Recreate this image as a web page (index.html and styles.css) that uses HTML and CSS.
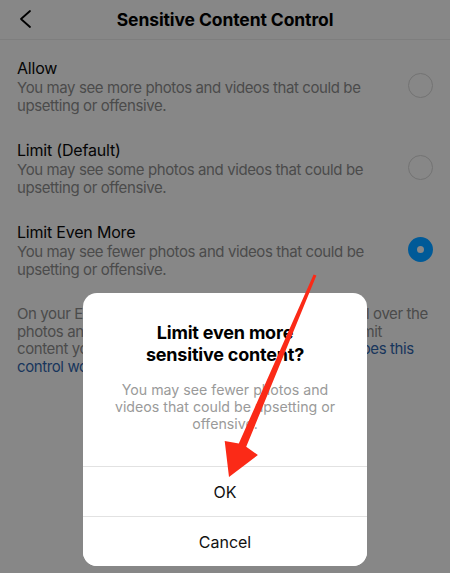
FILE: index.html
```html
<!DOCTYPE html>
<html lang="en">
<head>
<meta charset="utf-8">
<title>Sensitive Content Control</title>
<link rel="stylesheet" href="styles.css">
</head>
<body>
<div class="screen">
  <header class="topbar">
    <button class="back" aria-label="Back">
      <svg width="14" height="20" viewBox="0 0 14 20"><path d="M12 2 L3 10 L12 18" fill="none" stroke="#000" stroke-width="1.8" stroke-linecap="round" stroke-linejoin="round"/></svg>
    </button>
    <h1 class="title">Sensitive Content Control</h1>
    <span class="spacer"></span>
  </header>

  <ul class="options">
    <li class="option">
      <div class="option-text">
        <div class="option-name">Allow</div>
        <div class="option-desc">You may see more photos and videos that could be<br>upsetting or offensive.</div>
      </div>
      <span class="radio"></span>
    </li>
    <li class="option">
      <div class="option-text">
        <div class="option-name">Limit (Default)</div>
        <div class="option-desc">You may see some photos and videos that could be<br>upsetting or offensive.</div>
      </div>
      <span class="radio"></span>
    </li>
    <li class="option">
      <div class="option-text">
        <div class="option-name">Limit Even More</div>
        <div class="option-desc">You may see fewer photos and videos that could be<br>upsetting or offensive.</div>
      </div>
      <span class="radio checked"></span>
    </li>
  </ul>

  <p class="note">On your Explore pages, you have much more control over the<br>photos and videos you browse. You can decide to limit<br>content you see that you may find upsetting. <a href="#">How does this<br>control work?</a></p>

  <div class="dialog">
    <div class="dialog-body">
      <h2 class="dialog-title">Limit even more<br>sensitive content?</h2>
      <p class="dialog-text">You may see fewer photos and<br>videos that could be upsetting or<br>offensive.</p>
    </div>
    <button class="dialog-btn">OK</button>
    <button class="dialog-btn">Cancel</button>
  </div>

  <svg class="arrow" width="450" height="573" viewBox="0 0 450 573">
    <polygon fill="#fb2a17" points="316.4,275.6 313.6,274.4 238.8,443.6 224.7,440.9 229,477 257.9,455.1 246.2,446.8"/>
  </svg>
</div>
</body>
</html>
```

FILE: styles.css
```css
* { box-sizing: border-box; }

html, body {
  margin: 0;
  padding: 0;
}

body {
  background: #878787;
  font-family: "Inter", "Noto Sans", sans-serif;
  color: #000;
}

.screen {
  position: relative;
  width: 450px;
  height: 573px;
  overflow: hidden;
}

.topbar {
  display: grid;
  grid-template-columns: 60px 1fr 60px;
  align-items: center;
  height: 40px;
  border-bottom: 1px solid #7e7e7e;
}

.back {
  border: 0;
  background: none;
  padding: 0 0 2px 18px;
  display: flex;
  align-items: center;
  height: 40px;
}

.title {
  margin: 0 0 2px;
  text-align: center;
  font-size: 17.5px;
  font-weight: 700;
  letter-spacing: -0.1px;
}

.options {
  list-style: none;
  margin: 0;
  padding: 8px 17px 0;
}

.option {
  display: flex;
  align-items: center;
  justify-content: space-between;
  height: 82px;
  padding-bottom: 6px;
}

.option-name {
  font-size: 16px;
  line-height: 21px;
  color: #050505;
  letter-spacing: -0.2px;
}

.option-desc {
  font-size: 15px;
  line-height: 17.5px;
  color: #4b4b4b;
  letter-spacing: -0.4px;
}

.radio {
  width: 25px;
  height: 25px;
  border-radius: 50%;
  border: 1.5px solid #737373;
  flex: none;
  margin-top: -2px;
}

.radio.checked {
  border: 9px solid #005a98;
  background: #878787;
}

.note {
  margin: 11px 17px 0;
  font-size: 15px;
  line-height: 17.5px;
  color: #4b4b4b;
  letter-spacing: -0.4px;
  white-space: nowrap;
}

.note a {
  color: #17355c;
  text-decoration: none;
}

/* alert sheet */
.dialog {
  position: absolute;
  left: 83px;
  top: 293px;
  width: 284px;
  height: 273px;
  background: #fff;
  border-radius: 14px;
  display: flex;
  flex-direction: column;
  overflow: hidden;
}

.dialog-body {
  flex: 1;
  padding-top: 29px;
  text-align: center;
}

.dialog-title {
  margin: 0;
  font-size: 18px;
  line-height: 22px;
  font-weight: 700;
  letter-spacing: -0.2px;
}

.dialog-text {
  margin: 15px 0 0;
  font-size: 14.2px;
  line-height: 17px;
  color: #9a9a9a;
}

.dialog-btn {
  height: 50px;
  flex: none;
  border: 0;
  border-top: 1px solid #e2e2e2;
  background: #fff;
  font-family: inherit;
  font-size: 16px;
  color: #111;
}

.arrow {
  position: absolute;
  left: 0;
  top: 0;
  pointer-events: none;
}
```
